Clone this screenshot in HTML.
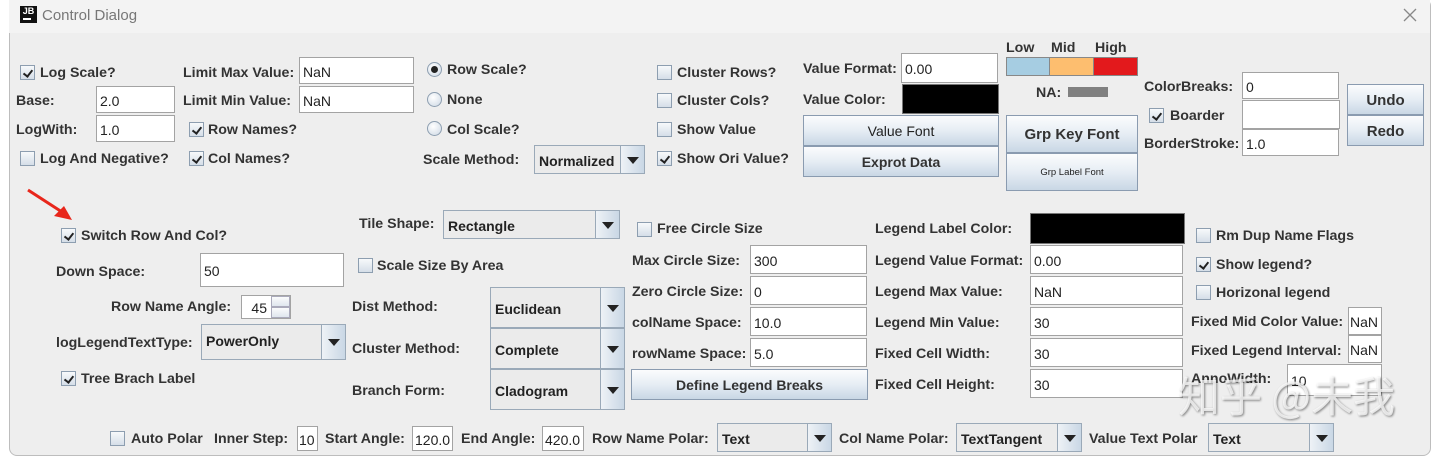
<!DOCTYPE html>
<html><head><meta charset="utf-8"><style>
*{box-sizing:border-box;margin:0;padding:0}
body{width:1440px;height:458px;background:#fff;position:relative;overflow:hidden;font-family:"Liberation Sans",Arial,sans-serif}
#win{position:absolute;left:9px;top:-2px;width:1422px;height:458px;background:#eeeeee;border:1px solid #bdbdbd;border-radius:0 8px 8px 8px}
#title{position:absolute;left:9px;top:0;width:1421px;height:33px;background:#f3f3f3}
.l{position:absolute;font-weight:bold;font-size:14.2px;color:#333;white-space:nowrap;line-height:16px}
.t{position:absolute;background:#fff;border:1px solid #a3a3a3;font-size:14px;color:#222;padding-left:3px;padding-top:2px;white-space:nowrap;overflow:hidden;display:flex;align-items:center}
.cb{position:absolute;width:15px;height:15px;border:1px solid #8d9eb0;background:linear-gradient(#f7f9fb,#d5dee8)}
.cb.c::after{content:"";position:absolute;left:4px;top:2px;width:4px;height:7px;border-right:2px solid #222;border-bottom:2px solid #222;transform:rotate(38deg)}
.rd{position:absolute;width:15px;height:15px;border-radius:50%;border:1px solid #8d9eb0;background:radial-gradient(circle at 40% 35%,#fff,#cdd8e4)}
.rd.c::after{content:"";position:absolute;left:3px;top:3px;width:7px;height:7px;border-radius:50%;background:#222}
.btn{position:absolute;border:1px solid #8a9bb0;background:linear-gradient(#fbfcfd,#e6edf4 50%,#c9d7e5);font-size:14px;color:#222;display:flex;align-items:center;justify-content:center;white-space:nowrap;padding-top:1px}
.b{font-weight:bold;color:#333}
.cmb{position:absolute;border:1px solid #9aa9b8;background:#ebebeb;font-weight:bold;font-size:14px;color:#222;padding-left:4px;padding-top:2px;display:flex;align-items:center}
.cmb .a{position:absolute;right:0;top:0;bottom:0;width:24px;border-left:1px solid #9aa9b8;background:linear-gradient(90deg,#eef2f6,#c9d7e5)}
.cmb .a::after{content:"";position:absolute;left:6px;top:50%;margin-top:-3px;border-left:6px solid transparent;border-right:6px solid transparent;border-top:7px solid #222}
.blk{position:absolute;background:#000;border:1px solid #777}
</style></head><body>
<div id="win"></div>
<div id="title"></div>
<div style="position:absolute;left:20px;top:6px;width:17px;height:17px;background:#111;color:#fff;font:bold 9px 'Liberation Sans';text-align:center;line-height:11px">JB<div style="width:8px;height:2px;background:#fff;margin:1px 0 0 3px"></div></div>
<div style="position:absolute;left:42px;top:7px;font-size:15px;color:#777">Control Dialog</div>
<svg style="position:absolute;left:1403px;top:8px" width="14" height="14"><path d="M1 1L13 13M13 1L1 13" stroke="#888" stroke-width="1.3"/></svg>

<div class="cb c" style="left:20px;top:65px"></div><div class="l" style="left:40px;top:65px">Log Scale?</div>
<div class="l" style="left:16px;top:93px">Base:</div><div class="t" style="left:96px;top:86px;width:79px;height:27px">2.0</div>
<div class="l" style="left:16px;top:122px">LogWith:</div><div class="t" style="left:96px;top:115px;width:79px;height:27px">1.0</div>
<div class="cb" style="left:20px;top:151px"></div><div class="l" style="left:40px;top:151px">Log And Negative?</div>

<div class="l" style="left:183px;top:65px">Limit Max Value:</div><div class="t" style="left:299px;top:57px;width:115px;height:27px">NaN</div>
<div class="l" style="left:183px;top:93px">Limit Min Value:</div><div class="t" style="left:299px;top:86px;width:115px;height:27px">NaN</div>
<div class="cb c" style="left:189px;top:122px"></div><div class="l" style="left:208px;top:122px">Row Names?</div>
<div class="cb c" style="left:189px;top:151px"></div><div class="l" style="left:208px;top:151px">Col Names?</div>

<div class="rd c" style="left:427px;top:62px"></div><div class="l" style="left:447px;top:62px">Row Scale?</div>
<div class="rd" style="left:427px;top:92px"></div><div class="l" style="left:447px;top:92px">None</div>
<div class="rd" style="left:427px;top:121px"></div><div class="l" style="left:447px;top:122px">Col Scale?</div>
<div class="l" style="left:423px;top:152px">Scale Method:</div>
<div class="cmb" style="left:534px;top:145px;width:111px;height:29px">Normalized<div class="a"></div></div>

<div class="cb" style="left:657px;top:65px"></div><div class="l" style="left:677px;top:65px">Cluster Rows?</div>
<div class="cb" style="left:657px;top:93px"></div><div class="l" style="left:677px;top:93px">Cluster Cols?</div>
<div class="cb" style="left:657px;top:122px"></div><div class="l" style="left:677px;top:122px">Show Value</div>
<div class="cb c" style="left:657px;top:151px"></div><div class="l" style="left:677px;top:151px">Show Ori Value?</div>

<div class="l" style="left:803px;top:61px">Value Format:</div><div class="t" style="left:901px;top:53px;width:97px;height:30px">0.00</div>
<div class="l" style="left:803px;top:92px">Value Color:</div><div class="blk" style="left:902px;top:84px;width:97px;height:30px"></div>
<div class="btn" style="left:803px;top:115px;width:196px;height:31px">Value Font</div>
<div class="btn b" style="left:803px;top:146px;width:196px;height:31px">Exprot Data</div>

<div class="l" style="left:1006px;top:40px">Low</div><div class="l" style="left:1051px;top:40px">Mid</div><div class="l" style="left:1095px;top:40px">High</div>
<div style="position:absolute;left:1006px;top:57px;width:44px;height:19px;background:#a6cde2;border:1px solid #888"></div>
<div style="position:absolute;left:1049px;top:57px;width:45px;height:19px;background:#fdbe6f;border:1px solid #888"></div>
<div style="position:absolute;left:1093px;top:57px;width:45px;height:19px;background:#e3191c;border:1px solid #888"></div>
<div class="l" style="left:1036px;top:85px">NA:</div><div style="position:absolute;left:1068px;top:87px;width:40px;height:10px;background:#808080"></div>
<div class="btn b" style="left:1006px;top:115px;width:132px;height:38px;font-size:15px">Grp Key Font</div>
<div class="btn" style="left:1006px;top:153px;width:132px;height:38px;font-size:9.5px">Grp Label Font</div>

<div class="l" style="left:1144px;top:79px">ColorBreaks:</div><div class="t" style="left:1242px;top:72px;width:97px;height:27px">0</div>
<div class="cb c" style="left:1149px;top:108px"></div><div class="l" style="left:1170px;top:108px">Boarder</div><div class="t" style="left:1242px;top:100px;width:98px;height:29px"></div>
<div class="l" style="left:1144px;top:136px">BorderStroke:</div><div class="t" style="left:1242px;top:129px;width:97px;height:27px">1.0</div>
<div class="btn b" style="left:1347px;top:84px;width:77px;height:31px;font-size:15px">Undo</div>
<div class="btn b" style="left:1347px;top:115px;width:77px;height:31px;font-size:15px">Redo</div>

<svg style="position:absolute;left:24px;top:186px" width="52" height="38"><path d="M4 4L38 26" stroke="#e8261b" stroke-width="3"/><path d="M48 34L30 30L40 20Z" fill="#e8261b"/></svg>

<div class="cb c" style="left:61px;top:228px"></div><div class="l" style="left:81px;top:228px">Switch Row And Col?</div>
<div class="l" style="left:56px;top:264px">Down Space:</div><div class="t" style="left:200px;top:253px;width:144px;height:34px">50</div>
<div class="l" style="left:111px;top:299px">Row Name Angle:</div>
<div class="t" style="left:241px;top:295px;width:50px;height:24px;justify-content:flex-end;padding-right:23px">45</div>
<div style="position:absolute;left:271px;top:296px;width:19px;height:11px;border:1px solid #aab;background:linear-gradient(#fafbfc,#dfe6ee)"></div>
<div style="position:absolute;left:271px;top:307px;width:19px;height:11px;border:1px solid #aab;background:linear-gradient(#fafbfc,#dfe6ee)"></div>
<div class="l" style="left:56px;top:335px">logLegendTextType:</div>
<div class="cmb" style="left:201px;top:324px;width:145px;height:36px;align-items:flex-start;padding-top:8px">PowerOnly<div class="a"></div></div>
<div class="cb c" style="left:61px;top:371px"></div><div class="l" style="left:81px;top:371px">Tree Brach Label</div>

<div class="l" style="left:359px;top:216px">Tile Shape:</div>
<div class="cmb" style="left:443px;top:210px;width:177px;height:29px">Rectangle<div class="a"></div></div>
<div class="cb" style="left:358px;top:258px"></div><div class="l" style="left:377px;top:258px">Scale Size By Area</div>
<div class="l" style="left:352px;top:299px">Dist Method:</div>
<div class="cmb" style="left:490px;top:287px;width:135px;height:41px">Euclidean<div class="a"></div></div>
<div class="l" style="left:352px;top:341px">Cluster Method:</div>
<div class="cmb" style="left:490px;top:328px;width:135px;height:41px">Complete<div class="a"></div></div>
<div class="l" style="left:352px;top:383px">Branch Form:</div>
<div class="cmb" style="left:490px;top:369px;width:135px;height:41px">Cladogram<div class="a"></div></div>

<div class="cb" style="left:637px;top:222px"></div><div class="l" style="left:657px;top:221px">Free Circle Size</div>
<div class="l" style="left:632px;top:253px">Max Circle Size:</div><div class="t" style="left:750px;top:245px;width:117px;height:29px">300</div>
<div class="l" style="left:632px;top:284px">Zero Circle Size:</div><div class="t" style="left:750px;top:276px;width:117px;height:29px">0</div>
<div class="l" style="left:632px;top:315px">colName Space:</div><div class="t" style="left:750px;top:307px;width:117px;height:29px">10.0</div>
<div class="l" style="left:632px;top:346px">rowName Space:</div><div class="t" style="left:750px;top:338px;width:117px;height:29px">5.0</div>
<div class="btn b" style="left:631px;top:369px;width:237px;height:31px">Define Legend Breaks</div>

<div class="l" style="left:875px;top:221px">Legend Label Color:</div><div class="blk" style="left:1030px;top:213px;width:155px;height:31px"></div>
<div class="l" style="left:875px;top:253px">Legend Value Format:</div><div class="t" style="left:1030px;top:245px;width:153px;height:29px">0.00</div>
<div class="l" style="left:875px;top:284px">Legend Max Value:</div><div class="t" style="left:1030px;top:276px;width:153px;height:29px">NaN</div>
<div class="l" style="left:875px;top:315px">Legend Min Value:</div><div class="t" style="left:1030px;top:307px;width:153px;height:29px">30</div>
<div class="l" style="left:875px;top:346px">Fixed Cell Width:</div><div class="t" style="left:1030px;top:338px;width:153px;height:29px">30</div>
<div class="l" style="left:875px;top:377px">Fixed Cell Height:</div><div class="t" style="left:1030px;top:369px;width:153px;height:29px">30</div>

<div class="cb" style="left:1196px;top:228px"></div><div class="l" style="left:1216px;top:228px">Rm Dup Name Flags</div>
<div class="cb c" style="left:1196px;top:257px"></div><div class="l" style="left:1216px;top:257px">Show legend?</div>
<div class="cb" style="left:1196px;top:285px"></div><div class="l" style="left:1216px;top:285px">Horizonal legend</div>
<div class="l" style="left:1191px;top:314px">Fixed Mid Color Value:</div><div class="t" style="left:1348px;top:307px;width:34px;height:28px;padding-left:1px">NaN</div>
<div class="l" style="left:1191px;top:343px">Fixed Legend Interval:</div><div class="t" style="left:1348px;top:335px;width:34px;height:28px;padding-left:1px">NaN</div>
<div class="l" style="left:1191px;top:371px">AnnoWidth:</div><div class="t" style="left:1287px;top:364px;width:95px;height:32px">10</div>
<div style="position:absolute;left:1178px;top:370px;font:42px 'Noto Sans CJK SC',sans-serif;color:rgba(255,255,255,0.75);text-shadow:1px 1px 2px rgba(0,0,0,0.45);white-space:nowrap;line-height:50px">知乎 @未我</div>

<div class="cb" style="left:110px;top:431px"></div><div class="l" style="left:131px;top:431px">Auto Polar</div>
<div class="l" style="left:214px;top:431px">Inner Step:</div><div class="t" style="left:297px;top:426px;width:21px;height:25px;padding-left:1px">10</div>
<div class="l" style="left:325px;top:431px">Start Angle:</div><div class="t" style="left:412px;top:426px;width:41px;height:25px;padding-left:2px">120.0</div>
<div class="l" style="left:461px;top:431px">End Angle:</div><div class="t" style="left:542px;top:426px;width:42px;height:25px;padding-left:2px">420.0</div>
<div class="l" style="left:592px;top:431px">Row Name Polar:</div>
<div class="cmb" style="left:717px;top:423px;width:115px;height:29px">Text<div class="a"></div></div>
<div class="l" style="left:839px;top:431px">Col Name Polar:</div>
<div class="cmb" style="left:956px;top:423px;width:126px;height:29px">TextTangent<div class="a"></div></div>
<div class="l" style="left:1089px;top:431px">Value Text Polar</div>
<div class="cmb" style="left:1208px;top:423px;width:126px;height:29px">Text<div class="a"></div></div>
</body></html>
